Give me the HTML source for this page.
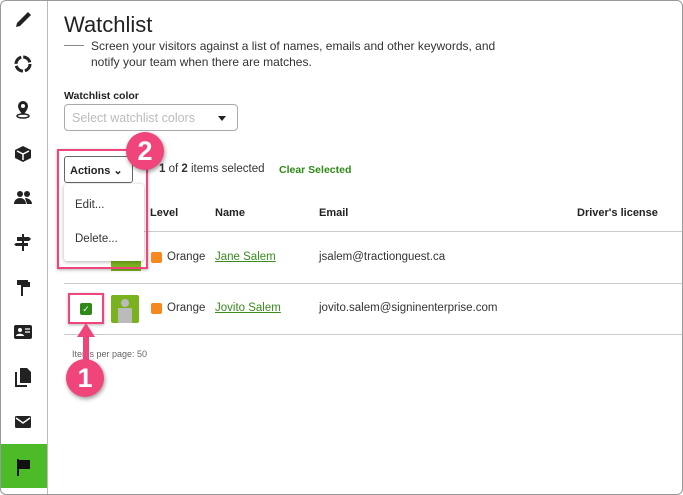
<!DOCTYPE html>
<html><head><style>
body{margin:0;width:683px;height:495px;background:#fff;font-family:"Liberation Sans",sans-serif;overflow:hidden;position:relative;color:#222}
.frame{position:absolute;left:0;top:0;width:681px;height:493px;border:1px solid #999;border-radius:6px;overflow:hidden}
.side{position:absolute;left:0;top:0;width:46px;height:495px;border-right:1px solid #bbb}
.ic{position:absolute;left:12px;width:20px;height:20px}
.abs{position:absolute}
.hd{font-weight:bold;font-size:11.5px;color:#222}
.cell{font-size:11.5px;color:#333}
a{color:#3a8a1e;font-size:11.5px;text-decoration:underline}
.badge{position:absolute;width:38px;height:38px;border-radius:50%;background:#f0457a;color:#fff;font-size:27px;font-weight:bold;text-align:center;line-height:38px;box-shadow:1px 2px 4px rgba(0,0,0,.4)}
</style></head><body>
<div class="frame">
<div class="side">
<svg class="ic" style="top:9px" viewBox="0 0 20 20"><path d="M3 17l1-4 9-9 3 3-9 9z M13 4l2-2 3 3-2 2" fill="#222"/></svg>
<svg class="ic" style="top:53px" viewBox="0 0 20 20"><circle cx="10" cy="10" r="7" fill="none" stroke="#222" stroke-width="3" stroke-dasharray="9 2"/></svg>
<svg class="ic" style="top:98px" viewBox="0 0 20 20"><path d="M10 2a5 5 0 0 1 5 5c0 4-5 9-5 9s-5-5-5-9a5 5 0 0 1 5-5z" fill="#222"/><circle cx="10" cy="7" r="2" fill="#fff"/><ellipse cx="10" cy="17" rx="6" ry="2" fill="none" stroke="#222" stroke-width="1.5"/></svg>
<svg class="ic" style="top:143px" viewBox="0 0 20 20"><path d="M10 2l8 4v8l-8 4-8-4V6z" fill="#222"/><path d="M4 7l6 3 6-3M10 10v6" stroke="#fff" stroke-width="1.5" fill="none"/></svg>
<svg class="ic" style="top:187px" viewBox="0 0 20 20"><circle cx="7" cy="6" r="3" fill="#222"/><circle cx="14" cy="6" r="3" fill="#222"/><path d="M1 16c0-4 3-6 6-6s6 2 6 6zM12 10c3 0 7 2 7 6h-5z" fill="#222"/></svg>
<svg class="ic" style="top:231px" viewBox="0 0 20 20"><path d="M9 2h2v17H9zM4 5h12l2 2-2 2H4zM3 11h12v3H3l-2-1.5z" fill="#222"/></svg>
<svg class="ic" style="top:276px" viewBox="0 0 20 20"><path d="M4 3h11v5H4zM15 5h2v5h-7v2H8V8h7z M8 12h2v7H8z" fill="#222"/></svg>
<svg class="ic" style="top:321px" viewBox="0 0 20 20"><rect x="1" y="3" width="18" height="14" rx="2" fill="#222"/><circle cx="7" cy="8" r="2" fill="#fff"/><path d="M3 14c0-3 8-3 8 0z" fill="#fff"/><path d="M12 7h5M12 10h5" stroke="#fff" stroke-width="1.2"/></svg>
<svg class="ic" style="top:366px" viewBox="0 0 20 20"><path d="M7 1h7l4 4v11H7z" fill="#222"/><path d="M3 5v14h11" fill="none" stroke="#222" stroke-width="2"/></svg>
<svg class="ic" style="top:411px" viewBox="0 0 20 20"><rect x="2" y="4" width="16" height="12" rx="1.5" fill="#222"/><path d="M3 6l7 5 7-5" stroke="#fff" stroke-width="1.5" fill="none"/></svg>
<div class="abs" style="left:0;top:443px;width:46px;height:44px;background:#4cbb27"></div>
<svg class="ic" style="top:456px" viewBox="0 0 20 20"><path d="M4 2h2v17H4zM6 3h11v9H6z" fill="#111"/></svg>
</div>

<div class="abs" style="left:63px;top:11px;font-size:22px;color:#222">Watchlist</div>
<div class="abs" style="left:63px;top:44px;width:20px;height:1px;background:#888"></div>
<div class="abs" style="left:90px;top:37px;font-size:12px;line-height:16px;color:#333">Screen your visitors against a list of names, emails and other keywords, and<br>notify your team when there are matches.</div>
<div class="abs hd" style="left:63px;top:89px;font-size:10.5px">Watchlist color</div>
<div class="abs" style="left:63px;top:103px;width:172px;height:25px;border:1px solid #aaa;border-radius:4px"></div>
<div class="abs" style="left:71px;top:110px;font-size:12.5px;color:#bbb">Select watchlist colors</div>
<div class="abs" style="left:217px;top:115px;border:4px solid transparent;border-top:5px solid #222"></div>

<div class="abs cell" style="left:158px;top:162px;font-size:11.5px"><b>1</b> of <b>2</b> items selected</div>
<div class="abs" style="left:278px;top:163px;font-size:10.5px;font-weight:bold;color:#2e8a16">Clear Selected</div>

<div class="abs hd" style="left:149px;top:206px;font-size:11px">Level</div>
<div class="abs hd" style="left:214px;top:206px;font-size:11px">Name</div>
<div class="abs hd" style="left:318px;top:206px;font-size:11px">Email</div>
<div class="abs hd" style="left:576px;top:206px;font-size:11px">Driver's license</div>
<div class="abs" style="left:63px;top:230px;width:620px;height:1px;background:#ccc"></div>

<div class="abs" style="left:110px;top:257px;width:30px;height:13px;background:#7ab21f"></div>
<div class="abs" style="left:150px;top:251px;width:11px;height:11px;background:#f7881f;border-radius:2px"></div>
<div class="abs cell" style="left:166px;top:250px">Orange</div>
<a class="abs" style="left:214px;top:250px">Jane Salem</a>
<div class="abs cell" style="left:318px;top:250px">jsalem@tractionguest.ca</div>
<div class="abs" style="left:63px;top:282px;width:620px;height:1px;background:#ccc"></div>

<div class="abs" style="left:63px;top:155px;width:67px;height:25px;border:1px solid #666;border-radius:3px;background:#fff"></div>
<div class="abs hd" style="left:69px;top:163px;font-size:11px">Actions ⌄</div>
<div class="abs" style="left:63px;top:183px;width:80px;height:77px;background:#fff;box-shadow:0 1px 4px rgba(0,0,0,.3);border-radius:3px"></div>
<div class="abs cell" style="left:74px;top:198px">Edit...</div>
<div class="abs cell" style="left:74px;top:232px">Delete...</div>
<div class="abs" style="left:56px;top:148px;width:87px;height:116px;border:2px solid #f0457a;box-shadow:0 1px 3px rgba(0,0,0,.3)"></div>
<div class="badge" style="left:125px;top:131px">2</div>

<div class="abs" style="left:79px;top:302px;width:12px;height:12px;background:#2e8a16;border-radius:2px;color:#fff;font-size:9px;text-align:center;line-height:12px">✓</div>
<div class="abs" style="left:67px;top:292px;width:32px;height:27px;border:2px solid #f0457a;box-shadow:0 1px 3px rgba(0,0,0,.3)"></div>
<div class="abs" style="left:110px;top:294px;width:28px;height:28px;background:#7ab21f;border-radius:2px"></div>
<div class="abs" style="left:120px;top:298px;width:8px;height:8px;background:#bbb;border-radius:50%"></div>
<div class="abs" style="left:117px;top:307px;width:14px;height:15px;background:#bbb"></div>
<div class="abs" style="left:150px;top:302px;width:11px;height:11px;background:#f7881f;border-radius:2px"></div>
<div class="abs cell" style="left:166px;top:301px">Orange</div>
<a class="abs" style="left:214px;top:301px">Jovito Salem</a>
<div class="abs cell" style="left:318px;top:301px">jovito.salem@signinenterprise.com</div>
<div class="abs" style="left:63px;top:333px;width:620px;height:1px;background:#ccc"></div>
<div class="abs" style="left:71px;top:348px;font-size:9px;color:#666">Items per page: 50</div>

<svg class="abs" style="left:71px;top:318px" width="28" height="46"><path d="M14 4L5 18h6v28h6V18h6z" fill="#f0457a"/></svg>
<div class="badge" style="left:65px;top:358px">1</div>
</div>
</body></html>
